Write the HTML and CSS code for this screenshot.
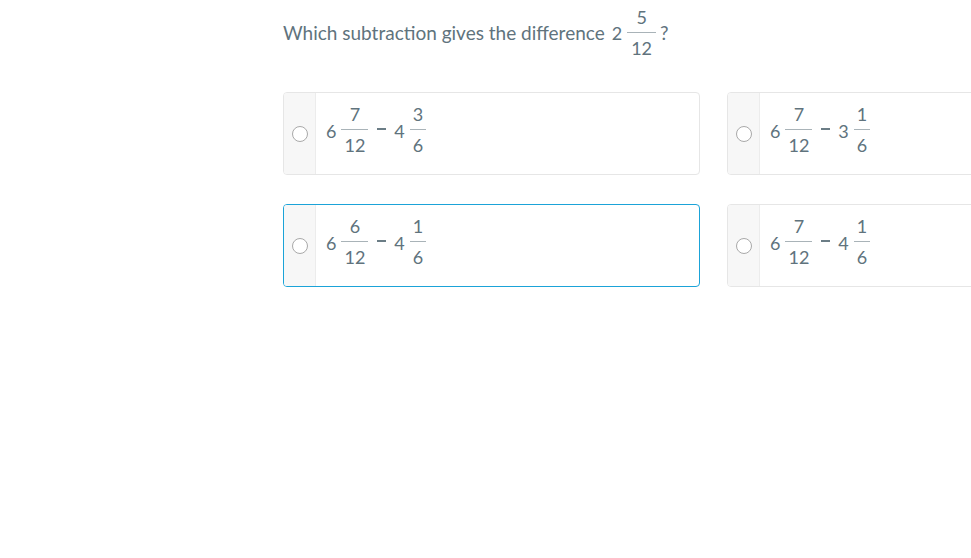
FILE: index.html
```html
<!DOCTYPE html>
<html>
<head>
<meta charset="utf-8">
<link rel="stylesheet" href="styles.css">
</head>
<body>
<div class="page">
  <div class="question">
    <span class="qtext">Which subtraction gives the difference</span>
    <span class="whole">2</span>
    <span class="frac"><span class="num">5</span><span class="den">12</span></span>
    <span class="qmark">?</span>
  </div>
  <div class="grid">
    <div class="card">
      <div class="side"><span class="radio"></span></div>
      <div class="expr">
        <span class="whole">6</span><span class="frac"><span class="num">7</span><span class="den">12</span></span>
        <span class="minus"></span>
        <span class="whole">4</span><span class="frac"><span class="num">3</span><span class="den">6</span></span>
      </div>
    </div>
    <div class="card">
      <div class="side"><span class="radio"></span></div>
      <div class="expr">
        <span class="whole">6</span><span class="frac"><span class="num">7</span><span class="den">12</span></span>
        <span class="minus"></span>
        <span class="whole">3</span><span class="frac"><span class="num">1</span><span class="den">6</span></span>
      </div>
    </div>
    <div class="card selected">
      <div class="side"><span class="radio"></span></div>
      <div class="expr">
        <span class="whole">6</span><span class="frac"><span class="num">6</span><span class="den">12</span></span>
        <span class="minus"></span>
        <span class="whole">4</span><span class="frac"><span class="num">1</span><span class="den">6</span></span>
      </div>
    </div>
    <div class="card">
      <div class="side"><span class="radio"></span></div>
      <div class="expr">
        <span class="whole">6</span><span class="frac"><span class="num">7</span><span class="den">12</span></span>
        <span class="minus"></span>
        <span class="whole">4</span><span class="frac"><span class="num">1</span><span class="den">6</span></span>
      </div>
    </div>
  </div>
</div>
</body>
</html>
```
FILE: styles.css
```css
html, body {
  margin: 0;
  padding: 0;
  background: #fff;
  overflow: hidden;
}
body {
  font-family: Lato, "Open Sans", sans-serif;
  color: #60737d;
}
.page {
  padding: 6px 0 0 283px;
  width: 900px;
}
.question {
  display: flex;
  align-items: center;
  font-size: 19px;
}
.qtext { margin-right: 7px; }
.question .whole { font-size: 18px; }
.question .frac { margin: 0 4px 0 5px; }
.question .frac .num,
.question .frac .den { padding-left: 4px; padding-right: 4px; }
.frac {
  display: inline-flex;
  flex-direction: column;
  align-items: stretch;
  text-align: center;
  font-size: 18px;
}
.frac .num {
  line-height: 22px;
  padding: 0 3px 4px;
  border-bottom: 1px solid #a9b3b8;
}
.frac .den {
  line-height: 22px;
  padding: 4px 3px 0;
}
.grid {
  display: grid;
  grid-template-columns: 417px 417px;
  column-gap: 27px;
  row-gap: 29px;
  margin-top: 33px;
}
.card {
  display: flex;
  height: 83px;
  box-sizing: border-box;
  border: 1px solid #e6e6e6;
  border-radius: 4px;
  overflow: hidden;
}
.card.selected {
  border-color: #1ba3d8;
}
.side {
  width: 31px;
  background: #f7f7f7;
  border-right: 1px solid #ececec;
  display: flex;
  align-items: center;
  justify-content: center;
}
.radio {
  width: 14px;
  height: 14px;
  border: 1px solid #a9a9a9;
  border-radius: 50%;
  background: #fff;
}
.expr {
  display: flex;
  align-items: center;
  padding: 0 0 9px 10px;
  font-size: 18px;
}
.expr .whole { padding-top: 3px; }
.expr .frac { margin-left: 5px; }
.minus {
  display: inline-block;
  width: 9px;
  height: 2px;
  background: #6b7d86;
  margin: 0 8px 0 9px;
}
```
